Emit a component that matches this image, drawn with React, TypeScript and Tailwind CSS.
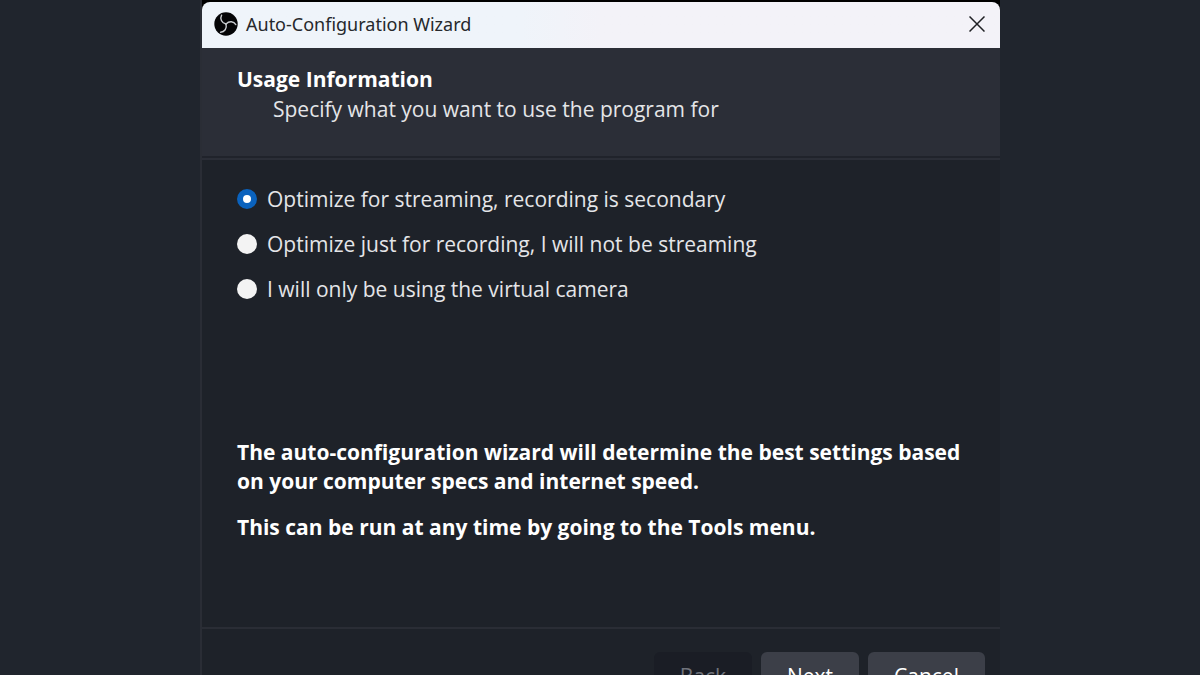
import { useState } from "react";

const USAGE_OPTIONS = [
  { id: "streaming", label: "Optimize for streaming, recording is secondary" },
  { id: "recording", label: "Optimize just for recording, I will not be streaming" },
  { id: "virtualcam", label: "I will only be using the virtual camera" },
];

function ObsLogo() {
  return (
    <svg viewBox="0 0 24 24" className="size-6 shrink-0" aria-hidden="true">
      <circle cx="12" cy="12" r="11.7" fill="#050507" />
      {[0, 120, 240].map((angle) => (
        <path
          key={angle}
          d="M7.6 3.2C5.8 6.6 7.4 10.8 12 12"
          transform={`rotate(${angle} 12 12)`}
          fill="none"
          stroke="#c9ccd0"
          strokeWidth="1.4"
          strokeLinecap="round"
        />
      ))}
    </svg>
  );
}

function TitleBar() {
  return (
    <div className="bg-black pt-0.5">
      <div className="flex h-[46px] items-center rounded-t-lg bg-linear-to-r from-[#eff4fa] from-40% to-[#f3f2f8] to-50% pb-0.5 pl-3 pr-[15px]">
        <ObsLogo />
        <span className="ml-2 font-['Noto_Sans',sans-serif] text-[18px] text-[#26282c]">
          Auto-Configuration Wizard
        </span>
        <button type="button" aria-label="Close" className="ml-auto text-[#1f2024]">
          <svg viewBox="0 0 16 16" className="size-4" fill="none" stroke="currentColor" strokeWidth="1.5">
            <path d="M0.5 0.5l15 15M15.5 0.5l-15 15" />
          </svg>
        </button>
      </div>
    </div>
  );
}

export default function App() {
  const [usage, setUsage] = useState("streaming");

  return (
    <div className="h-screen overflow-hidden bg-[#20252d] font-['Open_Sans',sans-serif] text-[21px] text-[#e4e5e8]">
      <div className="mx-auto flex h-full w-2/3 flex-col border-l-2 border-[#2a2d35] bg-[#1e2229]">
        <TitleBar />

        <header className="border-b-2 border-[#20232b] bg-[#2b2e37] px-[35px] pt-4 pb-8 leading-[30px]">
          <h1 className="font-bold text-white">Usage Information</h1>
          <p className="pl-9">Specify what you want to use the program for</p>
        </header>

        <main className="flex-1 border-t-2 border-[#2b2e37] px-[35px] pt-6">
          <fieldset className="flex flex-col gap-[15px] leading-[30px]">
            {USAGE_OPTIONS.map((option) => (
              <label key={option.id} className="flex items-center gap-2.5">
                <input
                  type="radio"
                  name="usage"
                  value={option.id}
                  checked={usage === option.id}
                  onChange={() => setUsage(option.id)}
                  className="size-5 shrink-0 appearance-none rounded-full bg-[#f3f3f3] checked:border-[6px] checked:border-[#0a62bd] checked:bg-white"
                />
                {option.label}
              </label>
            ))}
          </fieldset>

          <div className="mt-[134px] font-bold leading-[29px] text-white">
            <p>
              The auto-configuration wizard will determine the best settings based on your computer
              specs and internet speed.
            </p>
            <p className="mt-[17px]">This can be run at any time by going to the Tools menu.</p>
          </div>
        </main>

        <footer className="h-12 shrink-0 border-t-2 border-[#2a2d35] pr-[15px] pt-[23px]">
          <div className="flex justify-end gap-[9px]">
            <button type="button" disabled className="h-[50px] w-[98px] rounded-md bg-[#1a1d25] text-[#70737b]">
              Back
            </button>
            <button type="button" className="h-[50px] w-[98px] rounded-md bg-[#3c3f48] text-white">
              Next
            </button>
            <button type="button" className="h-[50px] w-[117px] rounded-md bg-[#3c3f48] text-white">
              Cancel
            </button>
          </div>
        </footer>
      </div>
    </div>
  );
}
